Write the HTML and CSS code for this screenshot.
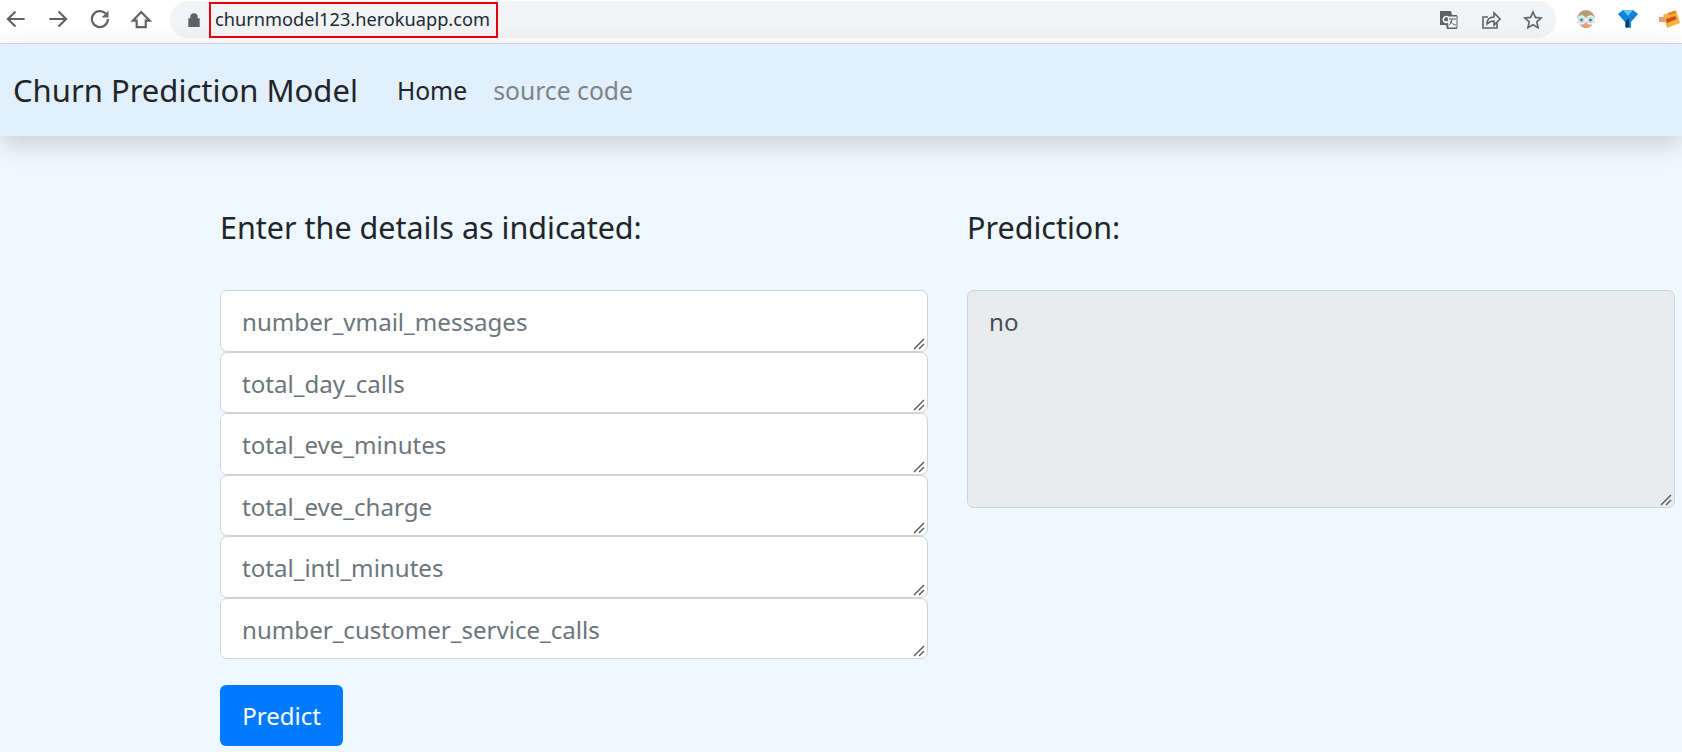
FILE: index.html
```html
<!DOCTYPE html>
<html lang="en">
<head>
<meta charset="utf-8">
<title>Churn Prediction Model</title>
<link rel="stylesheet" href="styles.css">
</head>
<body>
<header class="chrome">
  <div class="nav-icons">
    <svg class="icon" viewBox="0 0 24 24"><path d="M20 12H5M11.5 5 4.500 12l7 7"/></svg>
    <svg class="icon" viewBox="0 0 24 24"><path d="M4 12h15M12.500 5l7 7-7 7"/></svg>
    <svg class="icon" viewBox="0 0 24 24"><path d="M19.300 12a7.400 7.400 0 1 1-2.200-5.200"/><path class="solid" d="M19.800 4.200v6.300h-6.300z"/></svg>
    <svg class="icon" viewBox="0 0 24 24"><path d="M12.200 5.500 4.500 13.500H8v6h8.400v-6H20z"/></svg>
  </div>
  <div class="omnibox">
    <svg class="lock" viewBox="0 0 12 14"><path d="M1 6h10v8H1z M3 6V4a3 3 0 0 1 6 0v2" /></svg>
    <div class="url-box">churnmodel123.herokuapp.com</div>
    <div class="omni-right">
      <svg class="icon small" viewBox="0 0 20 20"><path class="solid" d="M1 1h11l1 4h5v14H8l-1-4H1z"/><path class="light" d="M8 6h10v12H9z"/><path class="thin-white" d="M9 7a3 3 0 1 0 0 5h-3"/><path class="thin" d="M10 9h7M13 9c0 3-2 5-3 6M11 11c1 2 4 4 6 4"/></svg>
      <svg class="icon small" viewBox="0 0 20 20"><path d="M16 13v5H2V7h5M6 14c0-5 3-7 7-7V3l6 6-6 6v-4c-3 0-5 1-7 3z"/></svg>
      <svg class="icon small" viewBox="0 0 20 20"><path d="M10 2l2.400 5.400 5.800.6-4.400 3.900 1.300 5.800L10 14.700l-5.100 3 1.300-5.800L1.800 8l5.800-.6z"/></svg>
    </div>
  </div>
  <div class="extensions">
    <svg class="ext" viewBox="0 0 20 20"><path d="M1 10a9 9 0 0 1 18 0v4H1z" fill="#b99a78"/><path d="M3 13c1 8 13 8 14 0z" fill="#e3a27c"/><circle cx="5.500" cy="11" r="4" fill="#bfe0e0" stroke="#eef6f6" stroke-width="1.500"/><circle cx="14.500" cy="11" r="4" fill="#bfe0e0" stroke="#eef6f6" stroke-width="1.500"/><circle cx="5.500" cy="11" r="1.200" fill="#45606a"/><circle cx="14.500" cy="11" r="1.200" fill="#45606a"/></svg>
    <svg class="ext" viewBox="0 0 20 20"><path d="M0 5 5 1h10l5 4-7 8v6l-6-1v-5z" fill="#0d84d8"/><path d="M5 1h10l-5 6z" fill="#5cc8f5"/><path d="M8 12v7l3-1V9z" fill="#123a5c"/></svg>
    <svg class="ext wide" viewBox="0 0 21 20"><path d="M4 6 17 1l4 13-13 5z" fill="#f6b13d"/><path d="M0 8h6v5H0z" fill="#e59a82"/><path d="M7 10l9-3 2 3-10 4z" fill="#cf4b20"/><path d="M9 4l7-2 1 2-7 2z" fill="#e8801f"/></svg>
  </div>
</header>

<nav class="navbar">
  <a class="brand" href="#">Churn Prediction Model</a>
  <a class="nav-link active" href="#">Home</a>
  <a class="nav-link" href="#">source code</a>
</nav>

<main class="content">
  <section class="column">
    <h2 class="title">Enter the details as indicated:</h2>
    <form class="fields">
      <textarea class="field" placeholder="number_vmail_messages"></textarea>
      <textarea class="field" placeholder="total_day_calls"></textarea>
      <textarea class="field" placeholder="total_eve_minutes"></textarea>
      <textarea class="field" placeholder="total_eve_charge"></textarea>
      <textarea class="field" placeholder="total_intl_minutes"></textarea>
      <textarea class="field" placeholder="number_customer_service_calls"></textarea>
      <button class="predict" type="button">Predict</button>
    </form>
  </section>
  <section class="column">
    <h2 class="title">Prediction:</h2>
    <textarea class="field result" disabled>no</textarea>
  </section>
</main>
</body>
</html>
```
FILE: styles.css
```css
* { box-sizing: border-box; }
html, body { margin: 0; height: 752px; overflow: hidden; }
body { background: #eff7ff; font-family: "Noto Sans", "Open Sans", sans-serif; color: #212529; }

.chrome { display: flex; align-items: flex-start; height: 44px; background: #fff; border-bottom: 1px solid #d6dadf; }
.nav-icons { display: flex; gap: 15.800px; padding: 6px 0 0 3px; width: 170px; }
.icon { width: 26px; height: 26px; fill: none; stroke: #5f6368; stroke-width: 2; }
.icon.small { width: 20px; height: 20px; stroke-width: 1.6; }
.omnibox { display: flex; align-items: center; width: 1386px; height: 37px; margin-top: 1px; background: #f1f3f4; border-radius: 19px; }
.lock { width: 12px; height: 14px; margin-left: 18px; fill: #5f6368; stroke: #5f6368; stroke-width: 1.400; }
.url-box { margin-left: 9px; width: 289px; height: 36px; border: 2px solid #e8000b; font-size: 18.200px; line-height: 31px; padding-left: 4px; color: #202a35; white-space: nowrap; }
.omni-right { display: flex; gap: 22px; margin-left: auto; padding-right: 13px; }
.solid { fill: #5f6368; stroke: none; }
.light { fill: #f1f3f4; stroke: #5f6368; stroke-width: 1; }
.thin { stroke-width: 1; }
.thin-white { stroke: #fff; stroke-width: 1.400; }
.extensions { display: flex; gap: 22px; padding: 9px 0 0 20px; }
.ext { width: 20px; height: 20px; flex: none; }
.ext.wide { width: 21px; margin-left: -1px; }

.navbar { display: flex; align-items: center; height: 92px; padding-left: 13px; background: #e2f0fd; box-shadow: 0 8px 25px rgba(0, 0, 0, .17); position: relative; }
.navbar a { text-decoration: none; }
.brand { font-size: 31px; color: #212529; margin-right: 39px; }
.nav-link { font-size: 24.700px; color: #7d8488; margin-right: 26px; }
.nav-link.active { color: #212529; }

.content { display: flex; gap: 39px; padding: 0 7px 0 220px; }
.column { width: 708px; }
.title { margin: 0; height: 154px; padding-top: 67px; font-size: 30.500px; line-height: 48px; font-weight: 400; }
.fields { display: flex; flex-direction: column; }
.field { display: block; width: 100%; height: 61.500px; padding: 13px 21px 7px; font: inherit; font-size: 24.100px; line-height: 36px; color: #495057; background: #fff; border: 1px solid #ced4da; border-radius: 7px; outline: none; }
.field::placeholder { color: #6c757d; opacity: 1; }
.field::-webkit-resizer { background: url("data:image/svg+xml,%3Csvg xmlns='http://www.w3.org/2000/svg' width='15' height='15'%3E%3Cpath d='M2 13 12 3M7 13l5-5' stroke='%23555' stroke-width='1.400' fill='none'/%3E%3C/svg%3E") no-repeat; }
.result { height: 218px; background: #e9ecef; }
.predict { align-self: flex-start; margin-top: 26px; width: 123px; height: 61px; font: inherit; font-size: 24px; color: #fff; background: #007bff; border: 0; border-radius: 6px; }
```
